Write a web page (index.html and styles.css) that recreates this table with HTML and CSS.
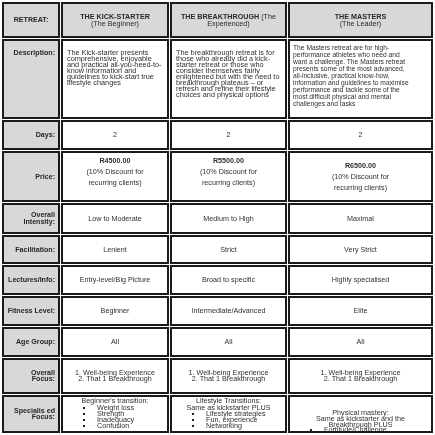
FILE: index.html
```html
<!DOCTYPE html>
<html>
<head>
<meta charset="utf-8">
<link rel="stylesheet" href="styles.css">
</head>
<body>
<div class="grid">
  <div class="cell label head-label">RETREAT:</div>
  <div class="cell head"><div class="h1">THE KICK-STARTER</div><div>(The Beginner)</div></div>
  <div class="cell head"><div><span class="h1">THE BREAKTHROUGH</span> (The</div><div>Experienced)</div></div>
  <div class="cell head"><div class="h1">THE MASTERS</div><div>(The Leader)</div></div>

  <div class="cell label top">Description:</div>
  <div class="cell desc">The Kick-starter presents<br>comprehensive, enjoyable<br>and practical all-you-need-to-<br>know information and<br>guidelines to kick-start true<br>lifestyle changes</div>
  <div class="cell desc">The breakthrough retreat is for<br>those who already did a kick-<br>starter retreat or those who<br>consider themselves fairly<br>enlightened but with the need to<br>breakthrough plateaus – or<br>refresh and refine their lifestyle<br>choices and physical options</div>
  <div class="cell desc desc3">The Masters retreat are for high-<br>performance athletes who need and<br>want a challenge. The Masters retreat<br>presents some of the most advanced,<br>all-inclusive, practical know-how,<br>information and guidelines to maximise<br>performance and tackle some of the<br>most difficult physical and mental<br>challenges and tasks</div>

  <div class="cell label">Days:</div>
  <div class="cell">2</div>
  <div class="cell">2</div>
  <div class="cell">2</div>

  <div class="cell label">Price:</div>
  <div class="cell price price-top"><div class="b">R4500.00</div><div>(10% Discount for</div><div>recurring clients)</div></div>
  <div class="cell price price-top"><div class="b">R5500.00</div><div>(10% Discount for</div><div>recurring clients)</div></div>
  <div class="cell price"><div class="b">R6500.00</div><div>(10% Discount for</div><div>recurring clients)</div></div>

  <div class="cell label two"><div>Overall</div><div>Intensity:</div></div>
  <div class="cell">Low to Moderate</div>
  <div class="cell">Medium to High</div>
  <div class="cell">Maximal</div>

  <div class="cell label">Facilitation:</div>
  <div class="cell">Lenient</div>
  <div class="cell">Strict</div>
  <div class="cell">Very Strict</div>

  <div class="cell label">Lectures/Info:</div>
  <div class="cell">Entry-level/Big Picture</div>
  <div class="cell">Broad to specific</div>
  <div class="cell">Highly specialised</div>

  <div class="cell label">Fitness Level:</div>
  <div class="cell">Beginner</div>
  <div class="cell">Intermediate/Advanced</div>
  <div class="cell">Elite</div>

  <div class="cell label">Age Group:</div>
  <div class="cell">All</div>
  <div class="cell">All</div>
  <div class="cell">All</div>

  <div class="cell label two tight"><div>Overall</div><div>Focus:</div></div>
  <div class="cell focus"><div>1. Well-being Experience</div><div>2. That 1 Breakthrough</div></div>
  <div class="cell focus"><div>1. Well-being Experience</div><div>2. That 1 Breakthrough</div></div>
  <div class="cell focus"><div>1. Well-being Experience</div><div>2. That 1 Breakthrough</div></div>

  <div class="cell label two tight"><div>Specialis ed</div><div>Focus:</div></div>
  <div class="cell spec">
    <div>Beginner's transition:</div>
    <ul class="bl"><li>Weight loss</li><li>Strength</li><li>Inadequacy</li><li>Confusion</li></ul>
  </div>
  <div class="cell spec">
    <div>Lifestyle Transitions:</div>
    <div>Same as kickstarter PLUS</div>
    <ul class="bl"><li>Lifestyle strategies</li><li>Fun, experience</li><li>Networking</li></ul>
  </div>
  <div class="cell spec spec3">
    <div>Physical mastery:</div>
    <div>Same as kickstarter and the</div>
    <div>Breakthrough PLUS</div>
    <ul class="bl"><li>Fortitude/Challenge</li></ul>
  </div>
</div>
</body>
</html>
```
FILE: styles.css
```css
html, body {
  margin: 0;
  padding: 0;
  background: #ffffff;
}

.grid {
  display: grid;
  grid-template-columns: 58px 108px 117px 145px;
  grid-template-rows: 36px 80px 30px 51px 31px 29px 30px 30px 30px 36px 38px;
  gap: 1px;
  padding: 2px 0 0 2px;
  width: 435px;
  height: 435px;
  box-sizing: border-box;
  overflow: hidden;
  will-change: transform;
  -webkit-font-smoothing: antialiased;
}

.cell {
  box-sizing: border-box;
  border: 2px solid #1b1b1b;
  background: #ffffff;
  display: flex;
  flex-direction: column;
  justify-content: center;
  align-items: center;
  text-align: center;
  overflow: hidden;
  white-space: nowrap;
  font-family: "Liberation Sans", Arial, sans-serif;
  font-size: 7.2px;
  line-height: 6px;
  color: #2f2f2f;
}

.label {
  background: #d8d8d8;
  align-items: flex-end;
  text-align: right;
  padding-right: 3px;
  font-weight: bold;
  font-size: 7.1px;
  color: #262626;
}

.label.two {
  line-height: 6.5px;
}

.label.tight {
  line-height: 6px;
}

.head-label {
  align-items: center;
  text-align: center;
  padding-right: 0;
}

.label.top {
  justify-content: flex-start;
  padding-top: 9px;
}

.head {
  background: #d8d8d8;
  line-height: 7px;
  color: #2a2a2a;
}

.h1 {
  font-weight: bold;
}

.desc {
  justify-content: flex-start;
  align-items: flex-start;
  text-align: left;
  padding: 9px 0 0 4px;
  display: block;
  font-size: 7.3px;
}

.desc3 {
  font-size: 6.7px;
  line-height: 7px;
  padding: 2.5px 0 0 3px;
}

.price {
  line-height: 11px;
}

.price-top {
  justify-content: flex-start;
  padding-top: 1.5px;
}

.b {
  font-weight: bold;
}

.focus {
  line-height: 6px;
}

.spec {
  line-height: 6.2px;
}

.spec3 {
  justify-content: flex-start;
  padding-top: 13px;
  line-height: 5.8px;
}

.bl {
  list-style: none;
  margin: 0;
  padding: 0;
  align-self: stretch;
  text-align: left;
}

.bl li {
  padding-left: 20px;
}

.bl li::before {
  content: "";
  display: inline-block;
  width: 2px;
  height: 2px;
  background: #222222;
  margin-right: 12px;
  vertical-align: middle;
}
```
